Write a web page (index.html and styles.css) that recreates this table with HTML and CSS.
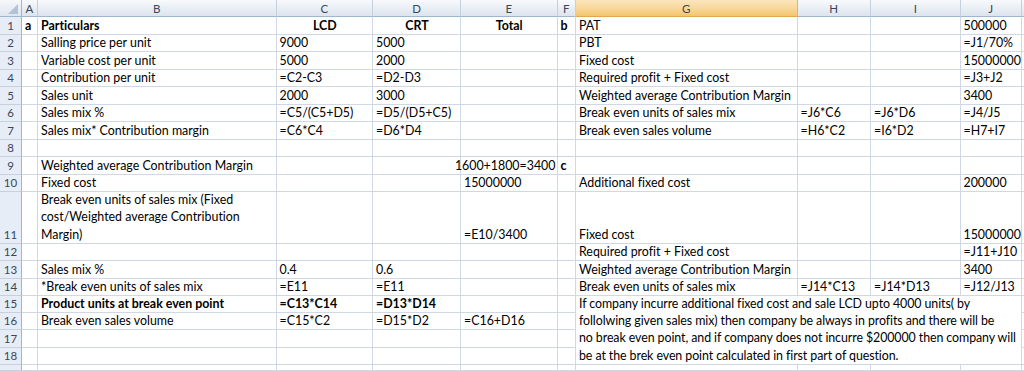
FILE: index.html
```html
<!DOCTYPE html>
<html>
<head>
<meta charset="utf-8">
<title>Sheet</title>
<link rel="stylesheet" href="styles.css">
</head>
<body>
<div class="sheet">
  <div class="corner"><svg width="22" height="17" viewBox="0 0 22 17"><polygon points="18,4 18,14 8,14" fill="#b4c2d6"/></svg></div>
  <div class="ch">A</div><div class="ch">B</div><div class="ch">C</div><div class="ch">D</div><div class="ch">E</div><div class="ch">F</div><div class="ch sel">G</div><div class="ch">H</div><div class="ch">I</div><div class="ch">J</div><div class="ch"></div>

  <div class="rh">1</div><div class="c b">a</div><div class="c b">Particulars</div><div class="c b ctr">LCD</div><div class="c b ctr">CRT</div><div class="c b ctr">Total</div><div class="c b">b</div><div class="c">PAT</div><div class="c"></div><div class="c"></div><div class="c">500000</div><div class="c"></div>

  <div class="rh">2</div><div class="c"></div><div class="c">Salling price per unit</div><div class="c">9000</div><div class="c">5000</div><div class="c"></div><div class="c"></div><div class="c">PBT</div><div class="c"></div><div class="c"></div><div class="c">=J1/70%</div><div class="c"></div>

  <div class="rh">3</div><div class="c"></div><div class="c">Variable cost per unit</div><div class="c">5000</div><div class="c">2000</div><div class="c"></div><div class="c"></div><div class="c">Fixed cost</div><div class="c"></div><div class="c"></div><div class="c">15000000</div><div class="c"></div>

  <div class="rh">4</div><div class="c"></div><div class="c">Contribution per unit</div><div class="c">=C2-C3</div><div class="c">=D2-D3</div><div class="c"></div><div class="c"></div><div class="c">Required profit + Fixed cost</div><div class="c"></div><div class="c"></div><div class="c">=J3+J2</div><div class="c"></div>

  <div class="rh">5</div><div class="c"></div><div class="c">Sales unit</div><div class="c">2000</div><div class="c">3000</div><div class="c"></div><div class="c"></div><div class="c">Weighted average Contribution Margin</div><div class="c"></div><div class="c"></div><div class="c">3400</div><div class="c"></div>

  <div class="rh">6</div><div class="c"></div><div class="c">Sales mix %</div><div class="c">=C5/(C5+D5)</div><div class="c">=D5/(D5+C5)</div><div class="c"></div><div class="c"></div><div class="c">Break even units of sales mix</div><div class="c">=J6*C6</div><div class="c">=J6*D6</div><div class="c">=J4/J5</div><div class="c"></div>

  <div class="rh">7</div><div class="c"></div><div class="c">Sales mix* Contribution margin</div><div class="c">=C6*C4</div><div class="c">=D6*D4</div><div class="c"></div><div class="c"></div><div class="c">Break even sales volume</div><div class="c">=H6*C2</div><div class="c">=I6*D2</div><div class="c">=H7+I7</div><div class="c"></div>

  <div class="rh">8</div><div class="c"></div><div class="c"></div><div class="c"></div><div class="c"></div><div class="c"></div><div class="c"></div><div class="c"></div><div class="c"></div><div class="c"></div><div class="c"></div><div class="c"></div>

  <div class="rh">9</div><div class="c"></div><div class="c">Weighted average Contribution Margin</div><div class="c"></div><div class="c"></div><div class="c r">1600+1800=3400</div><div class="c b">c</div><div class="c"></div><div class="c"></div><div class="c"></div><div class="c"></div><div class="c"></div>

  <div class="rh">10</div><div class="c"></div><div class="c">Fixed cost</div><div class="c"></div><div class="c"></div><div class="c">15000000</div><div class="c"></div><div class="c">Additional fixed cost</div><div class="c"></div><div class="c"></div><div class="c">200000</div><div class="c"></div>

  <div class="rh">11</div><div class="c"></div><div class="c"><span class="wrap">Break even units of sales mix (Fixed<br>cost/Weighted average Contribution<br>Margin)</span></div><div class="c"></div><div class="c"></div><div class="c">=E10/3400</div><div class="c"></div><div class="c">Fixed cost</div><div class="c"></div><div class="c"></div><div class="c">15000000</div><div class="c"></div>

  <div class="rh">12</div><div class="c"></div><div class="c"></div><div class="c"></div><div class="c"></div><div class="c"></div><div class="c"></div><div class="c">Required profit + Fixed cost</div><div class="c"></div><div class="c"></div><div class="c">=J11+J10</div><div class="c"></div>

  <div class="rh">13</div><div class="c"></div><div class="c">Sales mix %</div><div class="c">0.4</div><div class="c">0.6</div><div class="c"></div><div class="c"></div><div class="c">Weighted average Contribution Margin</div><div class="c"></div><div class="c"></div><div class="c">3400</div><div class="c"></div>

  <div class="rh">14</div><div class="c"></div><div class="c">*Break even units of sales mix</div><div class="c">=E11</div><div class="c">=E11</div><div class="c"></div><div class="c"></div><div class="c">Break even units of sales mix</div><div class="c">=J14*C13</div><div class="c">=J14*D13</div><div class="c">=J12/J13</div><div class="c"></div>

  <div class="rh">15</div><div class="c"></div><div class="c b">Product units at break even point</div><div class="c b">=C13*C14</div><div class="c b">=D13*D14</div><div class="c"></div><div class="c"></div>
  <div class="c merge"><span class="wrap">If company incurre additional fixed cost and sale LCD upto 4000 units( by<br>follolwing given sales mix) then company be always in profits and there will be<br>no break even point, and if company does not incurre $200000 then company will<br>be at the brek even point calculated in first part of question.</span></div>
  <div class="c"></div>

  <div class="rh">16</div><div class="c"></div><div class="c">Break even sales volume</div><div class="c">=C15*C2</div><div class="c">=D15*D2</div><div class="c">=C16+D16</div><div class="c"></div><div class="c"></div>

  <div class="rh">17</div><div class="c"></div><div class="c"></div><div class="c"></div><div class="c"></div><div class="c"></div><div class="c"></div><div class="c"></div>

  <div class="rh">18</div><div class="c"></div><div class="c"></div><div class="c"></div><div class="c"></div><div class="c"></div><div class="c"></div><div class="c"></div>

  <div class="rh"></div><div class="c"></div><div class="c"></div><div class="c"></div><div class="c"></div><div class="c"></div><div class="c"></div><div class="c"></div><div class="c"></div><div class="c"></div><div class="c"></div><div class="c"></div>
</div>
</body>
</html>
```

FILE: styles.css
```css
html, body {
  margin: 0;
  padding: 0;
  background: #ffffff;
}

body {
  width: 1024px;
  height: 371px;
  overflow: hidden;
  font-family: Lato, "Noto Sans", sans-serif;
  font-size: 12.4px;
  font-variant-ligatures: none;
  color: #000000;
}

.sheet {
  display: grid;
  grid-template-columns: 22px 16px 238.5px 96.5px 88px 96.5px 18.5px 221.5px 73.5px 89.5px 61.2px 1fr;
  grid-template-rows: 17px repeat(10, 17.5px) 52px repeat(7, 17.3px) 1fr;
  height: 371px;
}

.c {
  box-sizing: border-box;
  border-right: 1px solid #d0d7e5;
  border-bottom: 1px solid #d0d7e5;
  padding: 0 2px 0 3px;
  display: flex;
  align-items: flex-end;
  line-height: 17px;
  white-space: nowrap;
  overflow: hidden;
}

.b { font-weight: bold; }
.ctr { justify-content: center; }

.r {
  justify-content: flex-end;
  overflow: visible;
  padding-right: 1px;
}

.wrap {
  display: block;
  line-height: 17.3px;
}

.merge {
  grid-column: span 4;
  grid-row: span 4;
  border-right: 1px solid #d0d7e5;
  overflow: visible;
  letter-spacing: -0.08px;
}

.corner {
  box-sizing: border-box;
  background: linear-gradient(#f6f8fb, #dfe6ef);
  border-right: 1px solid #9eb6ce;
  border-bottom: 1px solid #9eb6ce;
}

.corner svg { display: block; }

.ch {
  box-sizing: border-box;
  background: linear-gradient(#f8fafc 0%, #eaeff5 50%, #dde4ed 100%);
  border-right: 1px solid #c5d1df;
  border-bottom: 1px solid #9eb6ce;
  color: #3b4758;
  display: flex;
  align-items: center;
  justify-content: center;
  font-size: 11.5px;
}

.ch.sel {
  background: linear-gradient(#fbe5bb 0%, #f8d89c 50%, #f3c66d 100%);
  border-right: 1px solid #e9b35a;
  border-bottom: 1px solid #e0a94f;
}

.rh {
  box-sizing: border-box;
  background: #e6edf6;
  border-right: 1px solid #9eb6ce;
  border-bottom: 1px solid #c5d1df;
  color: #3b4758;
  display: flex;
  align-items: flex-end;
  justify-content: center;
  line-height: 17px;
  font-size: 11.5px;
}
```
